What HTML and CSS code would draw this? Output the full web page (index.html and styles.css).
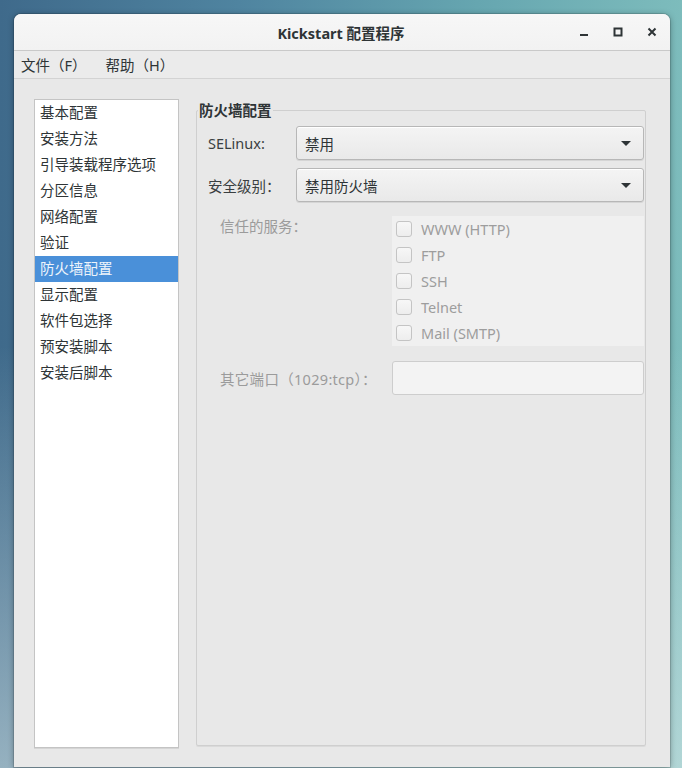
FILE: index.html
```html
<!DOCTYPE html>
<html lang="zh-CN">
<head>
<meta charset="utf-8">
<title>Kickstart 配置程序</title>
<link rel="stylesheet" href="styles.css">
</head>
<body>
<div class="desktop">
  <div class="window">
    <div class="titlebar">
      <div class="title">Kickstart 配置程序</div>
      <div class="wm-buttons">
        <span class="wm-btn"><svg width="12" height="12" viewBox="0 0 12 12"><rect x="2" y="8" width="8" height="2" fill="#2e3436"/></svg></span>
        <span class="wm-btn"><svg width="12" height="12" viewBox="0 0 12 12"><rect x="2.5" y="2.5" width="7" height="7" fill="none" stroke="#2e3436" stroke-width="2"/></svg></span>
        <span class="wm-btn"><svg width="12" height="12" viewBox="0 0 12 12"><path d="M2.5 2.5 L9.5 9.5 M9.5 2.5 L2.5 9.5" stroke="#2e3436" stroke-width="2" fill="none"/></svg></span>
      </div>
    </div>
    <div class="menubar">
      <span class="menu-item">文件（F）</span>
      <span class="menu-item">帮助（H）</span>
    </div>
    <div class="content">
      <ul class="nav-list">
        <li>基本配置</li>
        <li>安装方法</li>
        <li>引导装载程序选项</li>
        <li>分区信息</li>
        <li>网络配置</li>
        <li>验证</li>
        <li class="selected">防火墙配置</li>
        <li>显示配置</li>
        <li>软件包选择</li>
        <li>预安装脚本</li>
        <li>安装后脚本</li>
      </ul>
      <fieldset class="frame">
        <legend class="frame-title">防火墙配置</legend>
        <div class="frame-body">
          <div class="combo-row">
            <span class="combo-label">SELinux:</span>
            <div class="combo"><span>禁用</span><span class="arrow"></span></div>
          </div>
          <div class="combo-row">
            <span class="combo-label">安全级别：</span>
            <div class="combo"><span>禁用防火墙</span><span class="arrow"></span></div>
          </div>
          <div class="services-row">
            <span class="dim-label">信任的服务：</span>
            <div class="checklist">
              <div class="check-item"><span class="checkbox"></span><span>WWW (HTTP)</span></div>
              <div class="check-item"><span class="checkbox"></span><span>FTP</span></div>
              <div class="check-item"><span class="checkbox"></span><span>SSH</span></div>
              <div class="check-item"><span class="checkbox"></span><span>Telnet</span></div>
              <div class="check-item"><span class="checkbox"></span><span>Mail (SMTP)</span></div>
            </div>
          </div>
          <div class="port-row">
            <span class="dim-label">其它端口（1029:tcp）：</span>
            <div class="entry"></div>
          </div>
        </div>
      </fieldset>
    </div>
  </div>
</div>
</body>
</html>
```

FILE: styles.css
```css
html, body {
  margin: 0;
  padding: 0;
  width: 682px;
  height: 768px;
  overflow: hidden;
}
body {
  font-family: "Noto Sans", "Noto Sans CJK SC", sans-serif;
  font-size: 14.5px;
  color: #2e3436;
  background:
    linear-gradient(180deg, rgba(255,255,255,0) 0%, rgba(255,255,255,0) 45%, rgba(220,235,235,0.55) 100%),
    linear-gradient(90deg, #3f6a8b 0%, #4f84a0 35%, #66a6b0 70%, #7dbcbc 100%);
}
.desktop {
  height: 768px;
  box-sizing: border-box;
  padding: 14px 12px 0 14px;
}
.window {
  width: 656px;
  height: 753px;
  background: #e8e8e8;
  border-radius: 7px 7px 0 0;
  box-shadow: 0 1px 6px rgba(0,0,0,0.35), 0 0 0 1px rgba(0,0,0,0.12);
  display: flex;
  flex-direction: column;
  overflow: hidden;
}
.titlebar {
  height: 36px;
  flex: none;
  background: linear-gradient(#f7f7f7, #f2f2f2);
  border-bottom: 1px solid #c9c9c9;
  display: flex;
  align-items: center;
  justify-content: center;
  position: relative;
}
.title {
  font-weight: bold;
  font-size: 14.5px;
  color: #2e3436;
  margin-right: 2px;
}
.wm-buttons {
  position: absolute;
  right: 12px;
  top: 12px;
  display: flex;
  gap: 22px;
}
.wm-btn {
  width: 12px;
  height: 12px;
  display: block;
}
.wm-btn svg { display: block; }
.menubar {
  height: 27px;
  flex: none;
  border-bottom: 1px solid #d3d3d3;
  display: flex;
  align-items: center;
  padding-left: 7px;
  gap: 19px;
  background: #ebebeb;
}
.menu-item {
  line-height: 20px;
}
.content {
  flex: 1;
  display: flex;
  padding: 20px 24px 19px 20px;
  gap: 17px;
  min-height: 0;
}
.nav-list {
  list-style: none;
  margin: 0;
  padding: 0;
  width: 145px;
  box-sizing: border-box;
  flex: none;
  background: #ffffff;
  border: 1px solid #c4c4c4;
  box-shadow: 0 1px 0 rgba(0,0,0,0.08);
}
.nav-list li {
  height: 26px;
  line-height: 25px;
  padding-left: 5px;
  white-space: nowrap;
}
.nav-list li.selected {
  background: #4a90d9;
  color: #eef4fb;
}
.frame {
  flex: 1;
  margin: 0 0 2px 0;
  padding: 0;
  border: 1px solid #cfcfcf;
  border-radius: 2px;
  min-width: 0;
  box-shadow: 0 1px 0 rgba(0,0,0,0.06);
}
.frame-title {
  font-weight: bold;
  line-height: 22px;
  padding: 0 1px;
  margin-left: 1px;
}
.frame-body {
  padding: 5px 1px 0 11px;
  display: flex;
  flex-direction: column;
}
.combo-row {
  display: flex;
  align-items: center;
  height: 34px;
  margin-bottom: 8px;
}
.combo-label {
  width: 88px;
  flex: none;
  color: #3a3f41;
}
.combo {
  flex: 1;
  height: 34px;
  box-sizing: border-box;
  border: 1px solid #b7b7b7;
  border-radius: 3px;
  background: linear-gradient(#f4f4f4, #e9e9e9);
  box-shadow: inset 0 1px 0 #ffffff, 0 1px 0 rgba(0,0,0,0.08);
  display: flex;
  align-items: center;
  justify-content: space-between;
  padding: 0 12px 0 8px;
}
.arrow {
  width: 0;
  height: 0;
  border-left: 5px solid transparent;
  border-right: 5px solid transparent;
  border-top: 5px solid #2e3436;
  margin-top: 1px;
}
.services-row {
  display: flex;
  margin-top: 6px;
}
.dim-label {
  width: 172px;
  flex: none;
  margin-left: 12px;
  color: #9b9b9b;
}
.services-row .dim-label {
  line-height: 20px;
}
.port-row .dim-label {
  letter-spacing: 0.3px;
}
.checklist {
  flex: 1;
  background: #f0f0f0;
  display: flex;
  flex-direction: column;
}
.check-item {
  height: 26px;
  display: flex;
  align-items: center;
  color: #9d9d9d;
}
.checkbox {
  width: 16px;
  height: 16px;
  box-sizing: border-box;
  border: 1px solid #c4c4c4;
  border-radius: 3px;
  background: linear-gradient(#f7f7f7, #ededed);
  margin-left: 4px;
  margin-right: 9px;
  flex: none;
}
.port-row {
  display: flex;
  align-items: center;
  margin-top: 15px;
}
.entry {
  flex: 1;
  height: 34px;
  box-sizing: border-box;
  border: 1px solid #cdcdcd;
  border-radius: 3px;
  background: #f3f3f3;
}
```
